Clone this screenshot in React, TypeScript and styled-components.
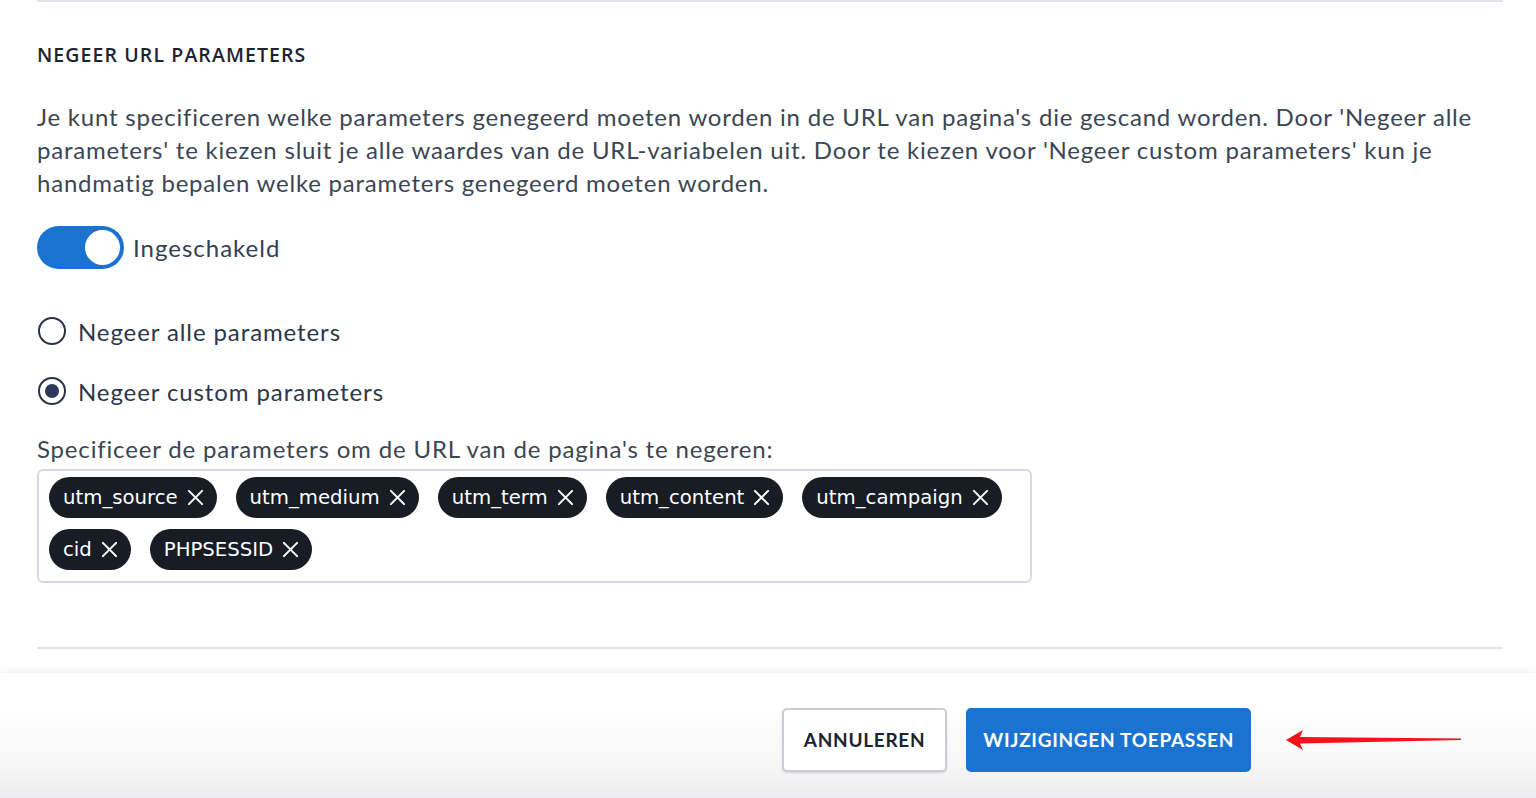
import React, { useState } from 'react'
import styled, { createGlobalStyle } from 'styled-components'

const GlobalStyle = createGlobalStyle`
  html, body {
    margin: 0;
    padding: 0;
    background: #fff;
  }
  body {
    font-family: Lato, 'Open Sans', sans-serif;
    color: #3b4654;
  }
`

const Page = styled.div`
  width: 1536px;
  height: 798px;
  display: flex;
  flex-direction: column;
  overflow: hidden;
`
const Content = styled.section`
  flex: 1;
  padding: 0 33px 0 37px;
`
const Rule = styled.div`
  height: 2px;
  background: #dfe4ec;
`
const Heading = styled.h3`
  margin: 42px 0 0;
  font-family: 'Open Sans', sans-serif;
  font-size: 19.5px;
  line-height: 22px;
  font-weight: 600;
  letter-spacing: 1.1px;
  color: #1d2330;
`
const Intro = styled.p`
  margin: 34px 0 0;
  font-size: 24px;
  line-height: 33px;
  letter-spacing: 0.78px;
  color: #3b4654;
`
const ToggleRow = styled.label`
  display: flex;
  align-items: center;
  gap: 9px;
  margin-top: 27px;
  font-size: 24px;
  letter-spacing: 1px;
  color: #344052;
  cursor: pointer;
`
const Track = styled.span<{ $on: boolean }>`
  position: relative;
  width: 87px;
  height: 43px;
  border-radius: 22px;
  background: ${(p) => (p.$on ? '#1a73d0' : '#c4c9d1')};
  flex-shrink: 0;
`
const Knob = styled.span<{ $on: boolean }>`
  position: absolute;
  top: 4px;
  left: ${(p) => (p.$on ? '48px' : '4px')};
  width: 35px;
  height: 35px;
  border-radius: 50%;
  background: #fff;
`
const Options = styled.div`
  display: flex;
  flex-direction: column;
  gap: 26px;
  margin-top: 45px;
`
const RadioRow = styled.label`
  display: flex;
  align-items: center;
  gap: 12px;
  height: 34px;
  padding-left: 1px;
  font-size: 24px;
  letter-spacing: 0.9px;
  color: #2c3749;
  cursor: pointer;
`
const RadioCircle = styled.span<{ $checked: boolean }>`
  width: 28px;
  height: 28px;
  box-sizing: border-box;
  border: 2.5px solid #2a3446;
  border-radius: 50%;
  display: flex;
  align-items: center;
  justify-content: center;
  &::after {
    content: '';
    width: 14px;
    height: 14px;
    border-radius: 50%;
    background: #2b3859;
    display: ${(p) => (p.$checked ? 'block' : 'none')};
  }
`
const FieldLabel = styled.div`
  margin-top: 26px;
  font-size: 24px;
  line-height: 30px;
  letter-spacing: 0.83px;
  color: #3b4654;
`
const TagBox = styled.div`
  margin-top: 5px;
  width: 995px;
  height: 114px;
  box-sizing: border-box;
  border: 2px solid #d6dbe2;
  border-radius: 6px;
  padding: 6px 10px;
  display: flex;
  flex-wrap: wrap;
  align-content: flex-start;
  column-gap: 19px;
  row-gap: 11px;
`
const Tag = styled.span`
  display: inline-flex;
  align-items: center;
  gap: 9px;
  height: 41px;
  padding: 0 13px 0 14px;
  border-radius: 21px;
  background: #181c24;
  color: #fff;
  font-family: 'DejaVu Sans', sans-serif;
  font-size: 19.7px;
`
const BottomRule = styled(Rule)`
  margin-top: 64px;
`
const Footer = styled.footer`
  height: 125px;
  flex-shrink: 0;
  box-sizing: border-box;
  padding: 8px 74px 0 0;
  display: flex;
  align-items: center;
  justify-content: flex-end;
  gap: 19px;
  background: linear-gradient(#ffffff 30%, #f6f6f7 75%, #ececee);
  box-shadow: 0 -3px 6px rgba(0, 0, 0, 0.05);
`
const Button = styled.button<{ $primary?: boolean }>`
  height: 64px;
  padding: 0 ${(p) => (p.$primary ? '15px' : '20px')};
  border-radius: 5px;
  border: 2px solid ${(p) => (p.$primary ? '#1a73d0' : '#c9cdd4')};
  background: ${(p) => (p.$primary ? '#1a73d0' : '#fff')};
  color: ${(p) => (p.$primary ? '#fff' : '#1d2330')};
  box-shadow: ${(p) => (p.$primary ? 'none' : '0 1px 2px rgba(0, 0, 0, 0.15)')};
  font-family: Lato, sans-serif;
  font-size: 19px;
  font-weight: 700;
  letter-spacing: 0.7px;
  text-transform: uppercase;
  cursor: pointer;
`
const Arrow = styled.svg`
  margin-left: 16px;
  flex-shrink: 0;
`

const CloseIcon = () => (
  <svg width="17" height="17" viewBox="0 0 18 18">
    <path d="M2 2 L16 16 M16 2 L2 16" stroke="#fff" strokeWidth="2.2" strokeLinecap="round" />
  </svg>
)

const tags = ['utm_source', 'utm_medium', 'utm_term', 'utm_content', 'utm_campaign', 'cid', 'PHPSESSID']

const App = () => {
  const [on, setOn] = useState(true)
  const [mode, setMode] = useState<'all' | 'custom'>('custom')

  return (
    <Page>
      <GlobalStyle />
      <Content>
        <Rule />
        <Heading>NEGEER URL PARAMETERS</Heading>
        <Intro>
          Je kunt specificeren welke parameters genegeerd moeten worden in de URL van pagina's die gescand
          worden. Door 'Negeer alle parameters' te kiezen sluit je alle waardes van de URL-variabelen uit. Door
          te kiezen voor 'Negeer custom parameters' kun je handmatig bepalen welke parameters genegeerd moeten
          worden.
        </Intro>
        <ToggleRow onClick={() => setOn(!on)}>
          <Track $on={on}>
            <Knob $on={on} />
          </Track>
          Ingeschakeld
        </ToggleRow>
        <Options>
          <RadioRow onClick={() => setMode('all')}>
            <RadioCircle $checked={mode === 'all'} />
            Negeer alle parameters
          </RadioRow>
          <RadioRow onClick={() => setMode('custom')}>
            <RadioCircle $checked={mode === 'custom'} />
            Negeer custom parameters
          </RadioRow>
        </Options>
        <FieldLabel>Specificeer de parameters om de URL van de pagina's te negeren:</FieldLabel>
        <TagBox>
          {tags.map((t) => (
            <Tag key={t}>
              {t}
              <CloseIcon />
            </Tag>
          ))}
        </TagBox>
        <BottomRule />
      </Content>
      <Footer>
        <Button>Annuleren</Button>
        <Button $primary>Wijzigingen toepassen</Button>
        <Arrow width="176" height="24" viewBox="0 0 176 24">
          <path d="M0 12 L17 2 L14 9 L175 10.5 L175 12 L14 15.5 L17 22 Z" fill="#f5121a" />
        </Arrow>
      </Footer>
    </Page>
  )
}

export default App
